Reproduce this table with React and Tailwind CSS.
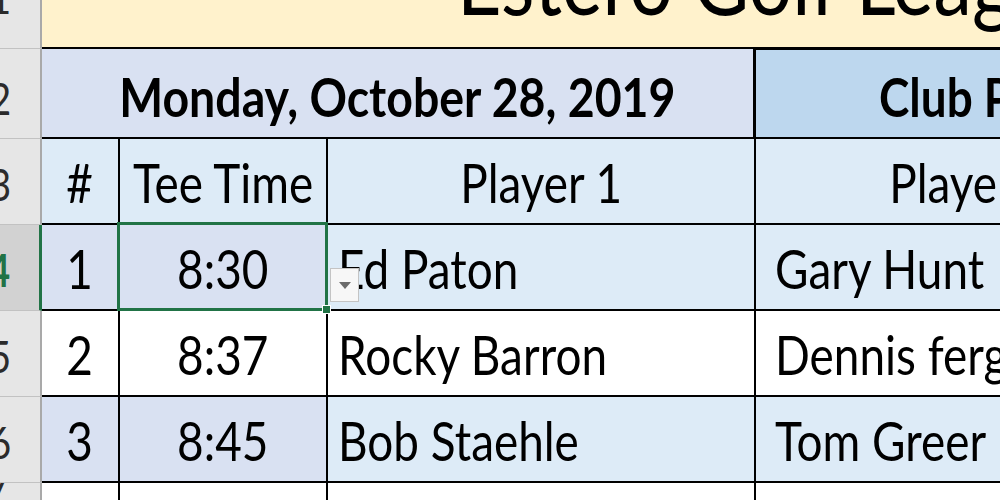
import React from "react";

const Txt = ({ children, className = "" }) => (
  <span className={"inline-block whitespace-nowrap " + className}>{children}</span>
);

const RowHead = ({ n, h, active }) => (
  <div
    className={
      "w-[42px] shrink-0 overflow-hidden flex items-end justify-end pr-[29px] pb-[17px] border-b border-b-[#c2c2c2] text-[45px] leading-none " +
      h +
      (active
        ? " bg-[#d2d2d2] border-r-[3px] border-r-[#217346] text-[#217346] font-bold"
        : " bg-[#e6e6e6] border-r-2 border-r-[#a9a9a9] text-[#2b2b2b]")
    }
  >
    <Txt className="scale-x-[0.85] origin-right">{n}</Txt>
  </div>
);

const cell =
  "shrink-0 flex items-end border-r-2 border-b-2 border-black pb-[13px] text-[54px] leading-none";

const Center = ({ w, bg, children, extra = "", over = null }) => (
  <div className={cell + " justify-center " + w + " " + bg + " " + extra}>
    <Txt className="scale-x-[0.85] origin-center">{children}</Txt>
    {over}
  </div>
);

const Left = ({ w, bg, pl, children, extra = "", over = null }) => (
  <div className={cell + " justify-start " + w + " " + bg + " " + pl + " " + extra}>
    <Txt className="scale-x-[0.85] origin-left">{children}</Txt>
    {over}
  </div>
);

const data = [
  { n: 4, num: "1", time: "8:30", p1: "Ed Paton", p2: "Gary Hunt", tint: true, active: true },
  { n: 5, num: "2", time: "8:37", p1: "Rocky Barron", p2: "Dennis ferguson", tint: false },
  { n: 6, num: "3", time: "8:45", p1: "Bob Staehle", p2: "Tom Greer", tint: true },
];

export default function App() {
  return (
    <div className="w-[1000px] h-[500px] overflow-hidden bg-white font-['Lato','Liberation_Sans',sans-serif] text-black">
      {/* row 1 - title */}
      <div className="flex h-[49px]">
        <div className="w-[42px] shrink-0 overflow-hidden flex items-end justify-end pr-[29px] pb-[28px] bg-[#e6e6e6] border-r-2 border-r-[#a9a9a9] border-b border-b-[#c2c2c2] text-[45px] leading-none text-[#2b2b2b]">
          <Txt className="scale-x-[0.85] origin-right">1</Txt>
        </div>
        <div className="w-[1200px] shrink-0 overflow-hidden flex items-end pl-[415px] pb-[21px] bg-[#fff2cc] border-b-2 border-black text-[93px] leading-none">
          <Txt className="scale-x-[0.83] origin-left">Estero Golf League</Txt>
        </div>
      </div>

      {/* row 2 - date */}
      <div className="flex h-[90px]">
        <RowHead n="2" h="h-[90px]" />
        <div className={cell + " w-[714px] justify-center bg-[#d9e1f2] border-r-[3px] font-bold"}>
          <Txt className="scale-x-[0.86] origin-center">Monday, October 28, 2019</Txt>
        </div>
        <Left w="w-[431px]" bg="bg-[#bdd7ee]" pl="pl-[123px]" extra="font-bold border-t border-t-black">
          Club Pairings
        </Left>
      </div>

      {/* row 3 - headings */}
      <div className="flex h-[86px]">
        <RowHead n="3" h="h-[86px]" />
        <Center w="w-[78px]" bg="bg-[#ddebf7]">#</Center>
        <Center w="w-[208px]" bg="bg-[#ddebf7]">Tee Time</Center>
        <Center w="w-[428px]" bg="bg-[#ddebf7]">Player 1</Center>
        <Center w="w-[431px]" bg="bg-[#ddebf7]">Player 2</Center>
      </div>

      {data.map((r) => {
        const lav = r.tint ? "bg-[#d9e1f2]" : "bg-white";
        const blue = r.tint ? "bg-[#ddebf7]" : "bg-white";
        return (
          <div key={r.n} className="flex h-[86px]">
            <RowHead n={r.n} h="h-[86px]" active={r.active} />
            <Center w="w-[78px]" bg={lav}>{r.num}</Center>
            <Center
              w="w-[208px]"
              bg={lav}
              extra="relative"
              over={
                r.active && (
                  <span className="absolute z-20 -left-[3px] -top-[3px] -right-[2px] -bottom-[2px] border-[3px] border-[#217346]">
                    <span className="absolute -right-[6px] -bottom-[6px] w-[9px] h-[9px] bg-[#217346] border border-white" />
                  </span>
                )
              }
            >
              {r.time}
            </Center>
            <Left
              w="w-[428px]"
              bg={blue}
              pl="pl-[10px]"
              extra="relative"
              over={
                r.active && (
                  <span className="absolute left-[2px] top-[43px] w-[29px] h-[34px] z-10 flex items-center justify-center bg-[#f7f7f7] border border-[#c4c4c4]">
                    <svg width="12" height="7" viewBox="0 0 12 7">
                      <path d="M0 0 L12 0 L6 7 Z" fill="#6b6b6b" />
                    </svg>
                  </span>
                )
              }
            >
              {r.p1}
            </Left>
            <Left w="w-[431px]" bg={blue} pl="pl-[19px]">
              {r.p2}
            </Left>
          </div>
        );
      })}

      {/* row 7 */}
      <div className="flex h-[40px]">
        <RowHead n="7" h="h-[40px]" />
        <div className="w-[78px] shrink-0 border-r-2 border-black" />
        <div className="w-[208px] shrink-0 border-r-2 border-black" />
        <div className="w-[428px] shrink-0 border-r-2 border-black" />
        <div className="w-[431px] shrink-0" />
      </div>
    </div>
  );
}
